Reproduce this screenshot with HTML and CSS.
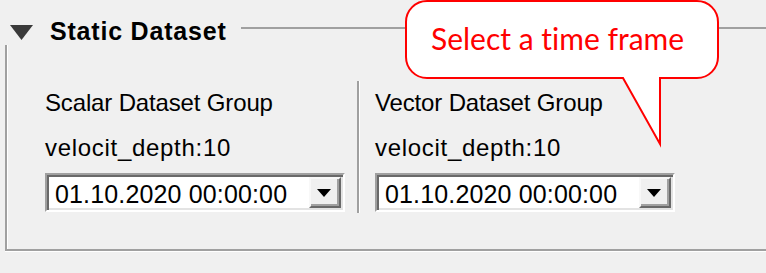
FILE: index.html
```html
<!DOCTYPE html>
<html>
<head>
<meta charset="utf-8">
<title>Static Dataset</title>
<link rel="stylesheet" href="styles.css">
</head>
<body>
<div class="page">
  <div class="header">
    <svg class="collapse-icon" width="23" height="15" viewBox="0 0 23 15">
      <polygon points="0,0 23,0 11.5,15" fill="#3a3a3a"/>
    </svg>
    <div class="title">Static Dataset</div>
    <div class="title-line"></div>
  </div>
  <div class="group">
    <div class="columns">
      <div class="column">
        <div class="label">Scalar Dataset Group</div>
        <div class="label value">velocit_depth:10</div>
        <div class="combo">
          <div class="combo-text">01.10.2020 00:00:00</div>
          <div class="combo-button"><span class="arrow"></span></div>
        </div>
      </div>
      <div class="separator"></div>
      <div class="column">
        <div class="label">Vector Dataset Group</div>
        <div class="label value">velocit_depth:10</div>
        <div class="combo">
          <div class="combo-text">01.10.2020 00:00:00</div>
          <div class="combo-button"><span class="arrow"></span></div>
        </div>
      </div>
    </div>
  </div>
  <div class="callout">
    <svg class="callout-shape" width="320" height="150" viewBox="0 0 320 150">
      <path d="M 23 1 H 293 A 21 21 0 0 1 314 22 V 57 A 21 21 0 0 1 293 78 H 256 V 144 L 219 78 H 23 A 21 21 0 0 1 2 57 V 22 A 21 21 0 0 1 23 1 Z" fill="#ffffff" stroke="#ff0000" stroke-width="2" stroke-miterlimit="10"/>
    </svg>
    <div class="callout-text">Select a time frame</div>
  </div>
</div>
</body>
</html>
```

FILE: styles.css
```css
html, body {
  margin: 0;
  padding: 0;
  background: #f0f0f0;
}

.page {
  position: relative;
  width: 766px;
  height: 273px;
  overflow: hidden;
  font-family: "Liberation Sans", Arial, sans-serif;
  color: #000;
}

.header {
  display: flex;
  align-items: flex-start;
  height: 45px;
}

.collapse-icon {
  display: block;
  margin-left: 10px;
  margin-top: 25px;
  flex: none;
}

.title {
  margin-left: 17px;
  padding-top: 16px;
  font-size: 25px;
  line-height: 30px;
  font-weight: bold;
  letter-spacing: 0.8px;
  white-space: nowrap;
}

.title-line {
  flex: 1;
  margin-left: 14px;
  margin-top: 27px;
  height: 2px;
  background: #a0a0a0;
}

.group {
  margin-left: 5px;
  border-left: 2px solid #a0a0a0;
  border-bottom: 2px solid #a0a0a0;
  box-shadow: inset 1px 0 0 #ffffff, 0 1px 0 #ffffff;
  padding: 36px 0 36px 38px;
}

.columns {
  display: flex;
  align-items: stretch;
}

.column {
  display: flex;
  flex-direction: column;
  align-items: flex-start;
  width: 300px;
  padding-top: 7px;
  padding-bottom: 1px;
}

.label {
  font-size: 24px;
  line-height: 30px;
  letter-spacing: -0.15px;
  white-space: nowrap;
}

.label + .label {
  margin-top: 15px;
}

.label.value {
  letter-spacing: 0.7px;
}

.separator {
  width: 2px;
  background: #a0a0a0;
  box-shadow: 1px 0 0 #ffffff;
  margin: 0 16px 0 12px;
}

.combo {
  margin-top: 10px;
  width: 300px;
  height: 39px;
  box-sizing: border-box;
  border: 2px solid;
  border-color: #a0a0a0 #ffffff #ffffff #a0a0a0;
  box-shadow: inset 2px 2px 0 #696969, inset -2px -2px 0 #e3e3e3;
  padding: 2px;
  background: #ffffff;
  display: flex;
}

.combo-text {
  flex: 1;
  padding: 3px 0 0 6px;
  font-size: 25px;
  line-height: 28px;
  letter-spacing: 0.15px;
  white-space: nowrap;
}

.combo-button {
  width: 32px;
  height: 31px;
  box-sizing: border-box;
  background: #f0f0f0;
  border-top: 2px solid #f8f8f8;
  border-left: 2px solid #f8f8f8;
  border-right: 2px solid #696969;
  border-bottom: 2px solid #696969;
  box-shadow: inset -2px -2px 0 #a0a0a0;
  display: flex;
  align-items: center;
  justify-content: center;
}

.arrow {
  display: block;
  width: 0;
  height: 0;
  border-left: 7px solid transparent;
  border-right: 7px solid transparent;
  border-top: 8px solid #000000;
  margin: 0 2px 0 0;
}

.callout {
  position: absolute;
  left: 404px;
  top: 0;
  width: 320px;
  height: 150px;
  z-index: 2;
}

.callout-shape {
  position: absolute;
  left: 0;
  top: 0;
  display: block;
}

.callout-text {
  position: relative;
  padding: 23px 0 0 27px;
  font-family: Lato, "Liberation Sans", sans-serif;
  font-size: 30px;
  line-height: 30px;
  font-variant-ligatures: none;
  color: #ff0000;
  white-space: nowrap;
}
```
